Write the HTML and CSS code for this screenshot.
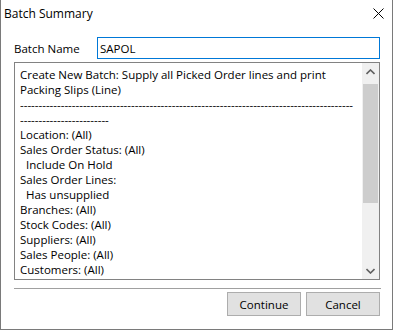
FILE: index.html
```html
<!DOCTYPE html>
<html lang="en">
<head>
  <meta charset="UTF-8" />
  <title>Batch Summary</title>
  <link rel="stylesheet" href="styles.css">
</head>
<body>

  <div class="window">
    <div class="titlebar">
      <span class="title">Batch Summary</span>
      <svg class="close" width="11" height="11" viewBox="0 0 11 11">
        <path d="M0.5 0.5 L10.5 10.5 M10.5 0.5 L0.5 10.5" stroke="#000" stroke-width="1" fill="none"/>
      </svg>
    </div>

    <div class="content">
      <div class="name-row">
        <label for="batch-name">Batch Name</label>
        <input id="batch-name" type="text" value="SAPOL">
      </div>

      <div class="listbox">
        <div class="summary">
          <div>Create New Batch: Supply all Picked Order lines and print Packing Slips (Line)</div>
          <div class="dashes">------------------------------------------------------------------------------------------</div>
          <div class="dashes">------------------------</div>
          <div>Location: (All)</div>
          <div>Sales Order Status: (All)</div>
          <div class="sub">Include On Hold</div>
          <div>Sales Order Lines:</div>
          <div class="sub">Has unsupplied</div>
          <div>Branches: (All)</div>
          <div>Stock Codes: (All)</div>
          <div>Suppliers: (All)</div>
          <div>Sales People: (All)</div>
          <div>Customers: (All)</div>
        </div>
        <div class="scrollbar">
          <div class="arrow">
            <svg width="9" height="6" viewBox="0 0 9 6"><path d="M0.5 5 L4.5 1 L8.5 5" stroke="#606060" stroke-width="1.6" fill="none"/></svg>
          </div>
          <div class="track">
            <div class="thumb"></div>
          </div>
          <div class="arrow">
            <svg width="9" height="6" viewBox="0 0 9 6"><path d="M0.5 1 L4.5 5 L8.5 1" stroke="#606060" stroke-width="1.6" fill="none"/></svg>
          </div>
        </div>
      </div>

      <div class="separator"></div>

      <div class="buttons">
        <button class="btn">Continue</button>
        <button class="btn">Cancel</button>
      </div>
    </div>
  </div>

</body>
</html>
```

FILE: styles.css
```css
body {
  margin: 0;
  padding: 0;
  background: #fff;
  font-family: 'Open Sans', 'Noto Sans', sans-serif;
  font-size: 11.5px;
  color: #000;
}

.window {
  width: 393px;
  height: 330px;
  box-sizing: border-box;
  border: 1px solid #7a7a7a;
  border-top: none;
  background: #fff;
  display: flex;
  flex-direction: column;
}

.titlebar {
  height: 30px;
  display: flex;
  align-items: center;
  justify-content: space-between;
  padding: 0 8px 4px 3px;
  box-sizing: border-box;
}

.title {
  font-size: 12px;
}

.close {
  display: block;
}

.content {
  padding: 0 12px 0 13px;
  display: flex;
  flex-direction: column;
}

.name-row {
  display: flex;
  align-items: center;
  margin-top: 7px;
  height: 22px;
}

.name-row label {
  width: 83px;
}

.name-row input {
  width: 283px;
  height: 22px;
  box-sizing: border-box;
  border: 1px solid #0078d7;
  padding: 0 2px;
  font-family: inherit;
  font-size: 11.5px;
  outline: none;
}

.listbox {
  margin-top: 3px;
  height: 218px;
  box-sizing: border-box;
  border: 1px solid #828282;
  display: flex;
  overflow: hidden;
}

.summary {
  flex: 1;
  padding: 4px 0 0 5px;
  line-height: 15px;
  overflow: hidden;
}

.dashes {
  white-space: nowrap;
  overflow: hidden;
}

.sub {
  padding-left: 6px;
}

.scrollbar {
  width: 17px;
  background: #f0f0f0;
  display: flex;
  flex-direction: column;
}

.arrow {
  height: 17px;
  display: flex;
  align-items: center;
  justify-content: center;
}

.arrow svg {
  display: block;
}

.track {
  flex: 1;
  padding: 0 1px;
}

.thumb {
  height: 119px;
  background: #cdcdcd;
  margin-top: 4px;
}

.separator {
  margin-top: 8px;
  margin-right: -1px;
  height: 1px;
  background: #a0a0a0;
  border-bottom: 1px solid #fff;
}

.buttons {
  display: flex;
  justify-content: flex-end;
  gap: 5px;
  margin-top: 2px;
}

.btn {
  width: 74px;
  height: 24px;
  background: #e1e1e1;
  border: 1px solid #adadad;
  font-family: inherit;
  font-size: 11.5px;
  color: #000;
  padding: 0;
}
```
